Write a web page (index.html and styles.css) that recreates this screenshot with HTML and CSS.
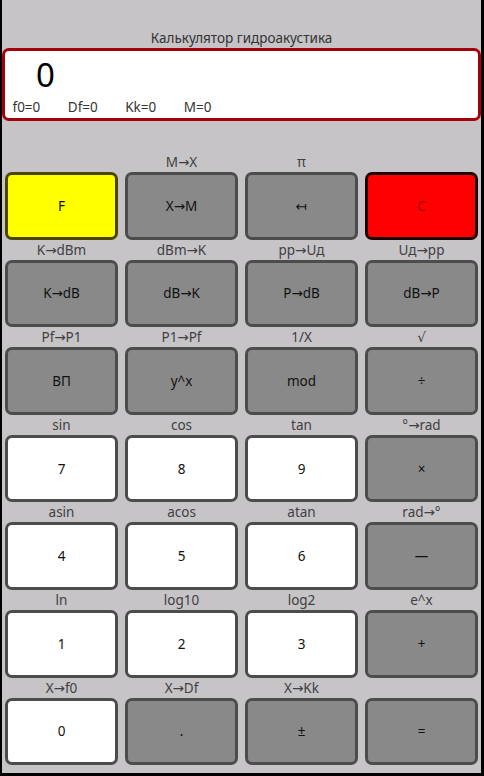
FILE: index.html
```html
<!DOCTYPE html>
<html lang="ru">
<head>
<meta charset="utf-8">
<title>Калькулятор гидроакустика</title>
<link rel="stylesheet" href="styles.css">
</head>
<body>
<div class="app">
  <div class="title">Калькулятор гидроакустика</div>
  <div class="display">
    <div class="value">0</div>
    <div class="regs">
      <span>f0=0</span><span>Df=0</span><span>Kk=0</span><span>M=0</span>
    </div>
  </div>
  <div class="keys">
    <div class="key"><div class="lbl"></div><div class="btn yellow">F</div></div>
    <div class="key"><div class="lbl">M→X</div><div class="btn gray">X→M</div></div>
    <div class="key"><div class="lbl">π</div><div class="btn gray">↤</div></div>
    <div class="key"><div class="lbl"></div><div class="btn red">C</div></div>

    <div class="key"><div class="lbl">K→dBm</div><div class="btn gray">K→dB</div></div>
    <div class="key"><div class="lbl">dBm→K</div><div class="btn gray">dB→K</div></div>
    <div class="key"><div class="lbl">pp→Uд</div><div class="btn gray">P→dB</div></div>
    <div class="key"><div class="lbl">Uд→pp</div><div class="btn gray">dB→P</div></div>

    <div class="key"><div class="lbl">Pf→P1</div><div class="btn gray">ВП</div></div>
    <div class="key"><div class="lbl">P1→Pf</div><div class="btn gray">y^x</div></div>
    <div class="key"><div class="lbl">1/X</div><div class="btn gray">mod</div></div>
    <div class="key"><div class="lbl">√</div><div class="btn gray">÷</div></div>

    <div class="key"><div class="lbl">sin</div><div class="btn white">7</div></div>
    <div class="key"><div class="lbl">cos</div><div class="btn white">8</div></div>
    <div class="key"><div class="lbl">tan</div><div class="btn white">9</div></div>
    <div class="key"><div class="lbl">°→rad</div><div class="btn gray">×</div></div>

    <div class="key"><div class="lbl">asin</div><div class="btn white">4</div></div>
    <div class="key"><div class="lbl">acos</div><div class="btn white">5</div></div>
    <div class="key"><div class="lbl">atan</div><div class="btn white">6</div></div>
    <div class="key"><div class="lbl">rad→°</div><div class="btn gray">—</div></div>

    <div class="key"><div class="lbl">ln</div><div class="btn white">1</div></div>
    <div class="key"><div class="lbl">log10</div><div class="btn white">2</div></div>
    <div class="key"><div class="lbl">log2</div><div class="btn white">3</div></div>
    <div class="key"><div class="lbl">e^x</div><div class="btn gray">+</div></div>

    <div class="key"><div class="lbl">X→f0</div><div class="btn white">0</div></div>
    <div class="key"><div class="lbl">X→Df</div><div class="btn gray">.</div></div>
    <div class="key"><div class="lbl">X→Kk</div><div class="btn gray">±</div></div>
    <div class="key"><div class="lbl"></div><div class="btn gray">=</div></div>
  </div>
</div>
</body>
</html>
```
FILE: styles.css
```css
html, body {
  margin: 0;
  padding: 0;
  background: #000;
}
body {
  width: 484px;
  height: 776px;
  overflow: hidden;
  font-family: "Noto Sans", "DejaVu Sans", sans-serif;
}
.app {
  margin: 0 3px 0 2px;
  height: 773px;
  background: #c6c4c7;
  display: flex;
  flex-direction: column;
}
.title {
  padding-top: 28px;
  height: 20px;
  line-height: 20px;
  font-size: 13.5px;
  color: #333;
  text-align: center;
}
.display {
  box-sizing: border-box;
  height: 73px;
  border: 3px solid #a4000c;
  border-radius: 7px;
  background: #fff;
  padding: 0 0 0 7px;
  display: flex;
  flex-direction: column;
}
.value {
  font-size: 33px;
  line-height: 40px;
  color: #000;
  padding-left: 24px;
  margin-top: 4px;
}
.regs {
  display: flex;
  gap: 27.5px;
  font-size: 13.5px;
  line-height: 20px;
  color: #333;
  padding-left: 0.5px;
  margin-top: 2px;
}
.keys {
  margin-top: 31px;
  padding: 0 3px;
  display: grid;
  grid-template-columns: repeat(4, 113px);
  column-gap: 7px;
}
.key {
  display: flex;
  flex-direction: column;
}
.lbl {
  height: 20.1px;
  line-height: 20px;
  font-size: 13.5px;
  color: #404040;
  text-align: center;
}
.btn {
  box-sizing: border-box;
  height: 67.5px;
  border: 3px solid #4c4c4c;
  border-radius: 7px;
  display: flex;
  align-items: center;
  justify-content: center;
  font-size: 13.5px;
  color: #111;
}
.gray { background: #898989; }
.white { background: #fff; }
.yellow { background: #ffff00; border-color: #4a4600; }
.red { background: #ff0000; border-color: #1c0000; color: #a00000; }
```
